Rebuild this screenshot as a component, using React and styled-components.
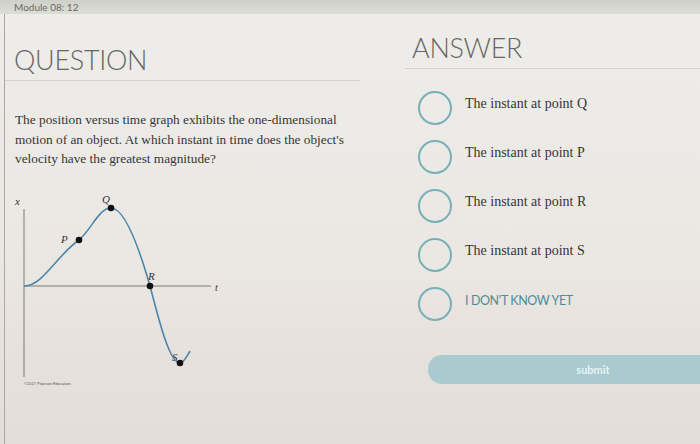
import React from 'react';
import styled, { createGlobalStyle } from 'styled-components';

const GlobalStyle = createGlobalStyle`
  html, body {
    margin: 0;
    padding: 0;
    width: 700px;
    height: 444px;
    overflow: hidden;
  }
`;

const Page = styled.div`
  width: 700px;
  height: 444px;
  overflow: hidden;
  display: flex;
  flex-direction: column;
  background: linear-gradient(180deg, #eeede9 0%, #ebe8e4 55%, #e4dcd8 100%);
  font-family: "Liberation Serif", serif;
`;

const TopBar = styled.div`
  height: 14px;
  flex: none;
  display: flex;
  align-items: center;
  padding-left: 14px;
  overflow: hidden;
  background: linear-gradient(180deg, #cfd0ca, #dcddd7);
  font-family: "Lato", sans-serif;
  font-size: 10px;
  line-height: 12px;
  color: #6a6a66;
`;

const Main = styled.div`
  flex: 1;
  display: grid;
  grid-template-columns: 355px 1fr;
  margin-left: 4px;
  border-left: 1px solid #a8a8a4;
`;

const Column = styled.section`
  display: flex;
  flex-direction: column;
  padding-top: ${p => p.$top}px;
  padding-left: ${p => p.$left}px;
`;

const Heading = styled.h2`
  margin: 0;
  padding-left: ${p => p.$indent || 0}px;
  font-family: "Lato", sans-serif;
  font-weight: 300;
  font-size: 27px;
  line-height: 32px;
  color: #666;
  letter-spacing: -0.3px;
`;

const Rule = styled.div`
  height: 1px;
  margin-top: 4px;
  margin-left: ${p => p.$inset || 0}px;
  background: #d3d2ce;
`;

const QuestionText = styled.p`
  margin: 29px 0 0 10px;
  font-size: 13.3px;
  line-height: 19.5px;
  color: #363636;
  width: 350px;
`;

const Graph = styled.svg`
  display: block;
  margin-top: 22px;
  margin-left: -10px;
`;

const Options = styled.div`
  display: flex;
  flex-direction: column;
  gap: 15px;
  margin-top: 22px;
  padding-left: 6px;
`;

const Option = styled.label`
  display: flex;
  align-items: center;
  gap: 13px;
  height: 34px;
  cursor: pointer;
`;

const Radio = styled.span`
  width: 30px;
  height: 30px;
  flex: none;
  border-radius: 50%;
  border: 2px solid #78b0b9;
`;

const OptionText = styled.span`
  font-family: ${p => (p.$sans ? '"Lato", sans-serif' : '"Liberation Serif", serif')};
  font-size: ${p => (p.$sans ? '12.5px' : '14px')};
  color: ${p => (p.$sans ? '#4f8d99' : '#363636')};
  letter-spacing: ${p => (p.$sans ? '-0.4px' : '0')};
  margin-top: -8px;
`;

const Submit = styled.button`
  margin-top: 34px;
  margin-left: 16px;
  width: 330px;
  height: 29px;
  border: none;
  border-radius: 14px;
  background: #a9cbd0;
  color: #e9f2f3;
  font-family: "Lato", sans-serif;
  font-weight: 700;
  font-size: 11px;
  text-align: center;
`;

const options = [
  'The instant at point Q',
  'The instant at point P',
  'The instant at point R',
  'The instant at point S',
];

const PositionGraph = () => (
  <Graph width="250" height="205" viewBox="0 0 250 205">
    <g fontFamily="Liberation Serif, serif" fontStyle="italic" fill="#333">
      <text x="20" y="14" fontSize="11">x</text>
      <text x="220" y="100" fontSize="10">t</text>
      <text x="66" y="52" fontSize="11">P</text>
      <text x="107" y="12" fontSize="11">Q</text>
      <text x="153" y="89" fontSize="11">R</text>
      <text x="177" y="170" fontSize="11">S</text>
    </g>
    <line x1="29" y1="18" x2="29" y2="186" stroke="#7a7a7a" strokeWidth="1" />
    <line x1="29" y1="95" x2="216" y2="95" stroke="#7a7a7a" strokeWidth="1" />
    <path
      d="M29,95 C48,95 62,64 84,49 C96,39 104,17 116,17 C130,17 145,60 155,95 C163,125 174,172 185,172 C189,172 192,165 195,160"
      fill="none"
      stroke="#4d86a8"
      strokeWidth="1.6"
    />
    <g fill="#111">
      <circle cx="84" cy="49" r="3.3" />
      <circle cx="116" cy="17" r="3.3" />
      <circle cx="155" cy="95" r="3.3" />
      <circle cx="185" cy="172" r="3.3" />
    </g>
    <text x="29" y="194" fontSize="4" fontFamily="Liberation Sans, sans-serif" fill="#555">
      ©2017 Pearson Education
    </text>
  </Graph>
);

const App = () => (
  <Page>
    <GlobalStyle />
    <TopBar>Module 08: 12</TopBar>
    <Main>
      <Column $top={30} $left={0}>
        <Heading $indent={9}>QUESTION</Heading>
        <Rule />
        <QuestionText>
          The position versus time graph exhibits the one-dimensional motion of an object. At which
          instant in time does the object's velocity have the greatest magnitude?
        </QuestionText>
        <PositionGraph />
      </Column>
      <Column $top={18} $left={52}>
        <Heading>ANSWER</Heading>
        <Rule $inset={-7} />
        <Options>
          {options.map(o => (
            <Option key={o}>
              <Radio />
              <OptionText>{o}</OptionText>
            </Option>
          ))}
          <Option>
            <Radio />
            <OptionText $sans>I DON'T KNOW YET</OptionText>
          </Option>
        </Options>
        <Submit>submit</Submit>
      </Column>
    </Main>
  </Page>
);

export default App;
